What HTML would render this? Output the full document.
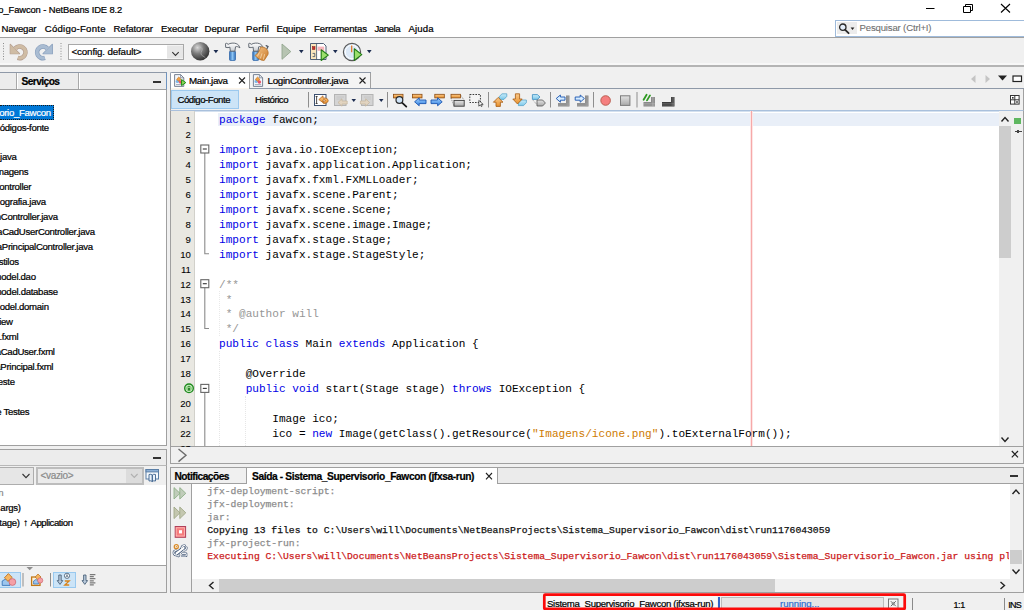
<!DOCTYPE html>
<html lang="pt-BR">
<head>
<meta charset="utf-8">
<title>Sistema_Supervisorio_Fawcon - NetBeans IDE 8.2</title>
<style>
html,body{margin:0;padding:0;}
body{width:1024px;height:610px;overflow:hidden;position:relative;background:#f0f0f0;font-family:"Liberation Sans",sans-serif;font-size:10px;color:#000;}
.a{position:absolute;}
.t{position:absolute;white-space:pre;line-height:16px;height:16px;-webkit-text-stroke:0.22px currentColor;}
.m{font-family:"Liberation Mono",monospace;-webkit-text-stroke:0;}
.b{font-weight:bold;}
svg{position:absolute;overflow:visible;}
.hl{background:#a3a3a3;}
.vl{background:#a3a3a3;}
</style>
</head>
<body>
<!-- ===== title + menu bar ===== -->
<div class="a" id="titlebar" style="left:0;top:0;width:1024px;height:37px;background:#fff"></div>
<div class="a hl" style="left:0;top:37px;width:1024px;height:1px;background:#a0a0a0"></div>
<svg id="wincontrols" style="left:920px;top:0" width="104" height="20" viewBox="920 0 104 20">
  <path d="M926 8.5H934.5" stroke="#000" stroke-width="1" fill="none"/>
  <path d="M963.5 6.5H970.5V12.5H963.5Z M965.5 6.5V4.5H972.5V10.5H970.5" stroke="#000" stroke-width="1" fill="none"/>
  <path d="M1001 4L1010 12.5M1010 4L1001 12.5" stroke="#000" stroke-width="1.1" fill="none"/>
</svg>
<div class="a" id="search" style="left:835px;top:20px;width:190px;height:17px;box-sizing:border-box;border:1px solid #9fbbdb;background:#fff">
  <div class="a" style="left:1px;top:1px;width:20px;height:12px;background:#ececec"></div>
</div>
<svg style="left:838px;top:22px" width="18" height="13" viewBox="0 0 18 13">
  <circle cx="4.8" cy="5.2" r="3.2" fill="#e4eefa" stroke="#2a2a2a" stroke-width="1.3"/>
  <path d="M7.2 7.8L10.6 11.2" stroke="#2a2a2a" stroke-width="1.8" stroke-linecap="round"/>
  <path d="M12.6 5.6h3.8l-1.9 2.3z" fill="#222"/>
</svg>

<!-- ===== main toolbar ===== -->
<div class="a" id="toolbar" style="left:0;top:38px;width:1024px;height:27px;background:#f0f0f0"></div>
<div class="a" style="left:0;top:63px;width:1024px;height:2px;background:#f7f7f7"></div>
<div class="a hl" style="left:0;top:65px;width:1024px;height:2px;background:#b4b4b4"></div>
<svg id="tbicons" style="left:0;top:38px" width="400" height="28" viewBox="0 38 400 28">
  <defs>
    <radialGradient id="gGlobe" cx="0.35" cy="0.3" r="0.75">
      <stop offset="0" stop-color="#d9d9d9"/><stop offset="0.45" stop-color="#7c7c7c"/><stop offset="1" stop-color="#2e2e2e"/>
    </radialGradient>
    <linearGradient id="gHandle" x1="0" x2="1" y1="0" y2="0">
      <stop offset="0" stop-color="#2f6fb8"/><stop offset="0.5" stop-color="#8cc4f4"/><stop offset="1" stop-color="#2f6fb8"/>
    </linearGradient>
    <linearGradient id="gHead" x1="0" x2="0" y1="0" y2="1"><stop offset="0" stop-color="#ffffff"/><stop offset="1" stop-color="#c9cdd2"/></linearGradient>
    <linearGradient id="gBroom" x1="0" x2="1" y1="0" y2="1">
      <stop offset="0" stop-color="#f6c68a"/><stop offset="1" stop-color="#c97a2a"/>
    </linearGradient>
  </defs>
  <!-- drag handles -->
  <path d="M3.5 43V61" stroke="#8c8c8c" stroke-width="1" stroke-dasharray="1 1.6" fill="none"/>
  <path d="M61 43V61" stroke="#8c8c8c" stroke-width="1" stroke-dasharray="1 1.6" fill="none"/>
  <!-- undo -->
  <g id="undo" stroke-linejoin="round" stroke-linecap="butt">
    <path d="M10.3 44.5V53.7H19.5Z" fill="#b49e90" stroke="#b49e90" stroke-width="1.2"/>
    <path d="M15.4 48.4A5.8 5.8 0 1 1 17.7 57.8" fill="none" stroke="#b49e90" stroke-width="4.6"/>
    <path d="M10.3 44.5V53.7H19.5Z" fill="#cfbca4"/>
    <path d="M15 48.9A5.8 5.8 0 1 1 17.9 57.75" fill="none" stroke="#cfbca4" stroke-width="3.3"/>
  </g>
  <!-- redo -->
  <g id="redo" stroke-linejoin="round" stroke-linecap="butt" transform="translate(62.6 0) scale(-1 1)">
    <path d="M10.3 44.5V53.7H19.5Z" fill="#869cba" stroke="#869cba" stroke-width="1.2"/>
    <path d="M15.4 48.4A5.8 5.8 0 1 1 17.7 57.8" fill="none" stroke="#869cba" stroke-width="4.6"/>
    <path d="M10.3 44.5V53.7H19.5Z" fill="#a9bcd2"/>
    <path d="M15 48.9A5.8 5.8 0 1 1 17.9 57.75" fill="none" stroke="#a9bcd2" stroke-width="3.3"/>
  </g>
  <!-- combo -->
  <rect x="68.5" y="44.5" width="115" height="15" fill="#fff" stroke="#a8a8a8" stroke-width="1"/>
  <rect x="167" y="45.5" width="16" height="13" fill="#e6e6e6"/>
  <path d="M172.3 52.2L175.5 55.4L178.7 52.2" stroke="#333" stroke-width="1.1" fill="none"/>
  <!-- globe -->
  <circle cx="200.2" cy="51.2" r="9.2" fill="url(#gGlobe)"/>
  <path d="M196 45C198 47 201 46.5 202 48.5C203 50.5 200.5 51.5 201 54C201.4 56 204 56 205.5 58" stroke="#bdbdbd" stroke-width="0.9" fill="none" opacity="0.6"/>
  <path d="M213.5 50H218.3L215.9 53.2Z" fill="#1c2c50"/>
  <!-- hammer (build) -->
  <g>
    <rect x="229.5" y="51" width="6" height="9.5" rx="1.1" fill="url(#gHandle)" stroke="#2a62a6" stroke-width="0.7"/>
    <path d="M225.5 44.1Q225.3 43.2 226.6 43.3L228.2 44.3C230.0 43 234.0 42.7 236.2 43.6C238.2 44.4 239.5 46 239.9 47.8C238.2 46.7 236.8 46.3 235.5 46.8L234.9 51.2H230.3L229.9 47.1C228.8 47.7 227.4 47.7 225.7 47.4Z" fill="url(#gHead)" stroke="#555c66" stroke-width="0.9" stroke-linejoin="round"/>
  </g>
  <!-- clean and build -->
  <g>
    <rect x="252.7" y="51" width="6" height="9.5" rx="1.1" fill="url(#gHandle)" stroke="#2a62a6" stroke-width="0.7"/>
    <path d="M248.7 44.1Q248.5 43.2 249.8 43.3L251.4 44.3C253.2 43 257.2 42.7 259.4 43.6C261.4 44.4 262.7 46 263.1 47.8C261.4 46.7 260.0 46.3 258.7 46.8L258.1 51.2H253.5L253.1 47.1C252.0 47.7 250.6 47.7 248.9 47.4Z" fill="url(#gHead)" stroke="#555c66" stroke-width="0.9" stroke-linejoin="round"/>
    <path d="M266.2 45.6L268 46.6L266.8 49" fill="none" stroke="#555c66" stroke-width="1.3" stroke-linecap="round"/>
    <path d="M260.6 47.2C262.6 46.6 265.4 47.6 266.8 49.2C268.2 51 268.4 52.8 268 54.4L264.2 60.4C261 60.6 257.2 58.4 255 55.4C257.6 54 259.6 50.8 260.6 47.2Z" fill="url(#gBroom)" stroke="#b0681c" stroke-width="0.7" stroke-linejoin="round"/>
    <path d="M259.4 52.4L257.4 56.4M262 53.4L260.4 58.4M264.6 54.2L263.4 59.6" stroke="#fbe2bc" stroke-width="0.7" fill="none"/>
  </g>
  <!-- run -->
  <path d="M282 44L290.8 51.6L282 59.3Z" fill="#b7c4b2" stroke="#93a68e" stroke-width="0.9" stroke-linejoin="round"/>
  <path d="M299 50H303.6L301.3 53.2Z" fill="#1c2c50"/>
  <!-- debug -->
  <g>
    <path d="M310.5 43.5H323.5L326 46V59.5H310.5Z" fill="#fff" stroke="#3c4e66" stroke-width="0.9"/>
    <rect x="311" y="44" width="5.4" height="15" fill="#fbe6bd"/>
    <path d="M316.6 43.5V59.5" stroke="#3c4e66" stroke-width="0.8"/>
    <rect x="312.4" y="46.6" width="2.6" height="3" fill="#c9302c" stroke="#7c1d1a" stroke-width="0.5"/>
    <path d="M312.6 53.4H314.8V56.6H312.6" stroke="#3c4e66" stroke-width="0.8" fill="none"/>
    <rect x="317.6" y="46.6" width="6.6" height="4.2" fill="#f7b4bc"/>
    <path d="M321.2 49.7L328.3 55.1L321.2 60.5Z" fill="#9be06c" stroke="#1f7a16" stroke-width="1.1" stroke-linejoin="round"/>
  </g>
  <path d="M333 50H337.6L335.3 53.2Z" fill="#1c2c50"/>
  <!-- profile -->
  <g>
    <circle cx="352" cy="52" r="8.6" fill="#dce9f7" stroke="#585858" stroke-width="1.2"/>
    <circle cx="352" cy="52" r="6.8" fill="none" stroke="#fff" stroke-width="1"/>
    <path d="M351.7 45.5V52.2" stroke="#e0701a" stroke-width="1.2"/>
    <path d="M354.3 48.8L361.8 54.6L354.3 60.4Z" fill="#9be06c" stroke="#1f7a16" stroke-width="1.1" stroke-linejoin="round"/>
  </g>
  <path d="M367 50H371.6L369.3 53.2Z" fill="#1c2c50"/>
</svg>


<!-- ===== projects panel ===== -->
<div class="a" id="projhead" style="left:0;top:72px;width:167px;height:18px;box-sizing:border-box;background:#ececec;border-top:1px solid #8f99a8;border-right:1px solid #6f94c0;border-bottom:1px solid #a0a0a0"></div>
<div class="a" style="left:16px;top:73px;width:1px;height:16px;background:#a8a8a8"></div>
<div class="a" style="left:17px;top:73px;width:1px;height:16px;background:#fff"></div>
<div class="a" style="left:78px;top:73px;width:1px;height:16px;background:#a8a8a8"></div>
<div class="a" style="left:79px;top:73px;width:1px;height:16px;background:#fff"></div>
<div class="a" style="left:153px;top:81px;width:8px;height:2px;background:#333"></div>
<div class="a" id="projtree" style="left:0;top:90px;width:167px;height:356px;box-sizing:border-box;background:#fff;border-right:1px solid #a0a0a0;border-bottom:1px solid #a0a0a0"></div>
<div class="a" id="treesel" style="left:0;top:105px;width:54px;height:15px;box-sizing:border-box;background:#0078d7;border:1px dotted #1a1a1a;border-left:none"></div>

<!-- ===== editor panel ===== -->
<div class="a" id="edtabs" style="left:170px;top:72px;width:854px;height:17px;background:#f0f0f0"></div>
<div class="a" id="edtabs-strip" style="left:170px;top:72px;width:201px;height:17px;box-sizing:border-box;border-top:1px solid #8f99a8;border-left:1px solid #8f99a8;border-radius:2px 0 0 0"></div>
<div class="a" id="tab-main" style="left:171px;top:73px;width:78px;height:16px;background:#fff"></div>
<div class="a" style="left:171px;top:88px;width:78px;height:2px;background:#fcf5ea"></div>
<div class="a" style="left:249px;top:73px;width:1px;height:16px;background:#a0a0a0"></div>
<div class="a" id="tab-login" style="left:250px;top:73px;width:120px;height:15px;background:#f4f4f4"></div>
<div class="a" style="left:370px;top:73px;width:1px;height:16px;background:#a0a0a0"></div>
<div class="a" style="left:249px;top:88px;width:775px;height:1px;background:#8f99a8"></div>
<div class="a" id="edtoolbar" style="left:170px;top:89px;width:854px;height:22px;box-sizing:border-box;border-left:1px solid #a0a0a0;border-right:1px solid #a0a0a0;border-bottom:1px solid #a9c0dc;background:#f0f0f0"></div>
<div class="a" id="btn-src" style="left:171px;top:90px;width:68px;height:19px;box-sizing:border-box;background:#cce4f7;border:1px solid #9cc9ee"></div>
<div class="a" id="editor" style="left:170px;top:111px;width:854px;height:336px;box-sizing:border-box;background:#fff;border-left:1px solid #a0a0a0;border-right:1px solid #a0a0a0;border-bottom:1px solid #a0a0a0"></div>
<div class="a" style="left:171px;top:111px;width:852px;height:1px;background:#d3e0ef"></div>
<div class="a" id="gutter" style="left:171px;top:111px;width:24px;height:335px;background:#e9e8e2"></div>
<div class="a" style="left:194px;top:111px;width:1px;height:335px;background:#d2d1cb"></div>
<div class="a" id="curline" style="left:218px;top:113px;width:781px;height:13px;background:#e9eff8"></div>
<div class="a" id="margin" style="left:751px;top:111px;width:1px;height:335px;background:#f6a9a9"></div>
<div class="a" style="left:750px;top:111px;width:1px;height:335px;background:#fde6e6"></div>
<div class="a" style="left:752px;top:111px;width:1px;height:335px;background:#fde6e6"></div>
<div class="a" id="vscroll" style="left:999px;top:111px;width:12px;height:335px;background:#f0f0f0"></div>
<div class="a" style="left:999px;top:126px;width:12px;height:132px;background:#cdcdcd"></div>
<div class="a" id="stripe" style="left:1011px;top:111px;width:12px;height:335px;background:#f0f0f0"></div>
<div class="a" style="left:1014px;top:118px;width:7px;height:6px;background:#5fb760"></div>
<div class="a" style="left:1015px;top:131px;width:7px;height:1px;background:#444"></div>
<div class="a" style="left:1017px;top:130px;width:2px;height:3px;background:#444"></div>
<svg style="left:999px;top:111px" width="12" height="335" viewBox="0 0 12 335">
  <path d="M2.5 10.5L6 6.5L9.5 10.5" stroke="#222" stroke-width="1.4" fill="none"/>
  <path d="M2.5 326.5L6 330.5L9.5 326.5" stroke="#222" stroke-width="1.4" fill="none"/>
</svg>
<svg id="edicons" style="left:171px;top:72px" width="853" height="40" viewBox="171 72 853 40">
  <defs>
    <linearGradient id="gOr" x1="0" x2="0" y1="0" y2="1"><stop offset="0" stop-color="#fbc98a"/><stop offset="1" stop-color="#e8922e"/></linearGradient>
    <linearGradient id="gBl" x1="0" x2="0" y1="0" y2="1"><stop offset="0" stop-color="#a8d4ff"/><stop offset="1" stop-color="#2f7fe0"/></linearGradient>
    <linearGradient id="gTag" x1="0" x2="0" y1="0" y2="1"><stop offset="0" stop-color="#c8ecfa"/><stop offset="1" stop-color="#7cc8ea"/></linearGradient>
    <linearGradient id="gGy" x1="0" x2="0" y1="0" y2="1"><stop offset="0" stop-color="#e4e4e4"/><stop offset="1" stop-color="#a8a8a8"/></linearGradient>
  </defs>
  <!-- tab file icons -->
  <g>
    <path d="M174.6 74.6H180.6L183.8 77.8V86.4H174.6Z" fill="#f4f7fb" stroke="#6a7588" stroke-width="0.9"/>
    <path d="M180.6 74.6V77.8H183.8" fill="none" stroke="#6a7588" stroke-width="0.7"/>
    <path d="M176.0 84.6H182.4" stroke="#8a94a6" stroke-width="0.8"/>
    <circle cx="177.4" cy="81.4" r="1.7" fill="#7db6ea"/>
    <path d="M178.8 77L181.0 79.2L178.8 81.4L176.6 79.2Z" fill="#f0a040" stroke="#b86a18" stroke-width="0.6"/>
    <circle cx="180.6" cy="82" r="1.7" fill="#e85068"/>
    <path d="M181.6 79.6L185.8 82.6L181.6 85.6Z" fill="#8fdc5c" stroke="#1f8a16" stroke-width="1"/>
  </g>
  <g>
    <path d="M253.4 74.6H259.4L262.6 77.8V86.4H253.4Z" fill="#f4f7fb" stroke="#6a7588" stroke-width="0.9"/>
    <path d="M259.4 74.6V77.8H262.6" fill="none" stroke="#6a7588" stroke-width="0.7"/>
    <path d="M254.8 84.6H261.2" stroke="#8a94a6" stroke-width="0.8"/>
    <circle cx="256.2" cy="81.4" r="1.7" fill="#7db6ea"/>
    <path d="M257.6 77L259.8 79.2L257.6 81.4L255.4 79.2Z" fill="#f0a040" stroke="#b86a18" stroke-width="0.6"/>
    <circle cx="259.4" cy="82" r="1.7" fill="#e85068"/>
  </g>
  <!-- tab close x -->
  <path d="M239 77.5L245 83.5M245 77.5L239 83.5" stroke="#222" stroke-width="1.1" fill="none"/>
  <path d="M359.5 77.5L365.5 83.5M365.5 77.5L359.5 83.5" stroke="#222" stroke-width="1.1" fill="none"/>
  <!-- tab row controls -->
  <path d="M975.5 75L971 79L975.5 83Z" fill="#c4c4c4"/>
  <path d="M985.5 75L990 79L985.5 83Z" fill="#c4c4c4"/>
  <path d="M998 75.5H1007L1002.5 80.5Z" fill="#222"/>
  <rect x="1013" y="76" width="8.5" height="5.5" fill="#fff" stroke="#222" stroke-width="1.2"/>
  <!-- separators -->
  <g stroke="#8e8e8e" stroke-width="1">
    <path d="M308.5 92V107.5M387.5 92V107.5M488.5 92V107.5M550.5 92V107.5M593.5 92V107.5M637 92V107.5"/>
  </g>
  <!-- last edit -->
  <rect x="314.5" y="94.5" width="11.5" height="11" fill="#fff" stroke="#3c5070" stroke-width="1"/>
  <path d="M316.6 96.5V103.5M315.6 96.5H317.6M315.6 103.5H317.6" stroke="#222" stroke-width="0.8" fill="none"/>
  <path d="M318.8 99.6L323 95.8V98C326.4 97.6 328.2 99 328.2 100.6C328.2 102.6 326 103.6 323.4 103.4V101.4C324.6 101.4 325.2 101 325.2 100.4C325.2 99.8 324.4 99.8 323 100V102.6Z" fill="url(#gOr)" stroke="#a85a10" stroke-width="0.7" stroke-linejoin="round"/>
  <!-- back (disabled) -->
  <rect x="334.5" y="94.5" width="11.5" height="11" fill="#d4d4d4" stroke="#b4b4b4" stroke-width="1"/>
  <path d="M336.5 97H344M336.5 99H342" stroke="#c2c2c2" stroke-width="0.8"/>
  <path d="M338 102.5L342 98.8V101H347.2V104H342V106.2Z" fill="#e2d4c0" stroke="#c4b49c" stroke-width="0.7" stroke-linejoin="round"/>
  <path d="M351.5 99H356L353.75 102Z" fill="#1c2c50"/>
  <!-- forward (disabled) -->
  <rect x="361.5" y="94.5" width="11.5" height="11" fill="#d4d4d4" stroke="#b4b4b4" stroke-width="1"/>
  <path d="M364 97H371M366 99H371" stroke="#c2c2c2" stroke-width="0.8"/>
  <path d="M369.6 102.5L365.6 98.8V101H360.4V104H365.6V106.2Z" fill="#e2d4c0" stroke="#c4b49c" stroke-width="0.7" stroke-linejoin="round"/>
  <path d="M379 99H383.5L381.25 102Z" fill="#1c2c50"/>
  <!-- find selection -->
  <rect x="393.5" y="94.3" width="9.5" height="3.6" fill="url(#gOr)" stroke="#8a4a10" stroke-width="0.8"/>
  <path d="M402 102.6L406.3 106.6" stroke="#1a1a1a" stroke-width="1.8" stroke-linecap="round"/>
  <circle cx="399.4" cy="100" r="3.4" fill="#cfe4f8" stroke="#2a2a2a" stroke-width="1.2"/>
  <!-- find prev -->
  <rect x="412.5" y="94.3" width="9.5" height="3.6" fill="url(#gOr)" stroke="#8a4a10" stroke-width="0.8"/>
  <path d="M414.6 101.8L419.2 97.8V100H426V103.6H419.2V105.8Z" fill="url(#gBl)" stroke="#1a55b0" stroke-width="0.9" stroke-linejoin="round"/>
  <!-- find next -->
  <rect x="434.8" y="94.3" width="9.5" height="3.6" fill="url(#gOr)" stroke="#8a4a10" stroke-width="0.8"/>
  <path d="M442.2 101.8L437.6 97.8V100H431V103.6H437.6V105.8Z" fill="url(#gBl)" stroke="#1a55b0" stroke-width="0.9" stroke-linejoin="round"/>
  <!-- toggle highlight -->
  <path d="M451 98L454 106M460.5 95L464.3 100.5" stroke="#555" stroke-width="0.7" stroke-dasharray="1 1" fill="none"/>
  <rect x="451" y="94.3" width="9.5" height="3.6" fill="url(#gOr)" stroke="#8a4a10" stroke-width="0.8"/>
  <rect x="454" y="100.4" width="10.2" height="5.8" fill="url(#gGy)" stroke="#3a3a3a" stroke-width="0.9"/>
  <!-- rect select -->
  <rect x="469.8" y="94.5" width="10.6" height="8" fill="#f4f4f4" stroke="#3a3a3a" stroke-width="1" stroke-dasharray="1.6 1.2"/>
  <path d="M478.8 100.4V106.2L480.3 104.8L481.4 106.6L482.2 106.1L481.2 104.4H483.2Z" fill="#fff" stroke="#222" stroke-width="0.7" stroke-linejoin="round"/>
  <!-- prev bookmark -->
  <path d="M499.2 96.6L502 93.8H506.8V96.4L504 99.4H499.2Z" fill="url(#gTag)" stroke="#4a9cc4" stroke-width="0.7" stroke-linejoin="round"/>
  <path d="M498.2 97.4L503 102.2H500.4V106.4H496V102.2H493.4Z" fill="url(#gOr)" stroke="#a85a10" stroke-width="0.8" stroke-linejoin="round"/>
  <!-- next bookmark -->
  <path d="M518.4 102.8L521.2 100H526.4V102.6L523.6 105.6H518.4Z" fill="url(#gTag)" stroke="#4a9cc4" stroke-width="0.7" stroke-linejoin="round"/>
  <path d="M517.5 104L512.8 99H515.4V93.8H519.6V99H522.2Z" fill="url(#gOr)" stroke="#a85a10" stroke-width="0.8" stroke-linejoin="round"/>
  <!-- toggle bookmark -->
  <path d="M533.2 100.4L538.2 106" stroke="#666" stroke-width="0.7" stroke-dasharray="1 1"/>
  <path d="M532.4 94.6H537.4L540 97L537.4 99.4H532.4Z" fill="url(#gTag)" stroke="#3a8cc0" stroke-width="0.8" stroke-linejoin="round"/>
  <path d="M537 100H542.6L545.4 103L542.6 106H537Z" fill="url(#gGy)" stroke="#555" stroke-width="0.8" stroke-linejoin="round"/>
  <!-- shift left -->
  <path d="M566 95.5H569.5V106.5H558V103H566Z" fill="#8a8a8a" />
  <path d="M558 104H569.5M558 105.4H569.5M567.2 95.5V106.5M568.4 95.5V106.5" stroke="#b0b0b0" stroke-width="0.4"/>
  <path d="M556.2 98.5L560.4 95V97H565V100.2H560.4V102.2Z" fill="#d6ecff" stroke="#1a55b0" stroke-width="0.9" stroke-linejoin="round"/>
  <!-- shift right -->
  <path d="M585 95.5H588.5V106.5H577V103H585Z" fill="#8a8a8a"/>
  <path d="M577 104H588.5M577 105.4H588.5M586.2 95.5V106.5M587.4 95.5V106.5" stroke="#b0b0b0" stroke-width="0.4"/>
  <path d="M584.4 98.5L580.2 95V97H575.2V100.2H580.2V102.2Z" fill="#d6ecff" stroke="#1a55b0" stroke-width="0.9" stroke-linejoin="round"/>
  <!-- macro record / stop -->
  <circle cx="605.6" cy="100.5" r="4.8" fill="#f57f7f" stroke="#b4584a" stroke-width="0.9"/>
  <rect x="620.5" y="95.8" width="9.4" height="9.6" fill="url(#gGy)" stroke="#7c7c7c" stroke-width="1"/>
  <!-- comment -->
  <path d="M651 97H655V106.5H643.5V102H651Z" fill="#888"/>
  <path d="M643.5 103.4H655M643.5 105H655M652.4 97V106.5M653.8 97V106.5" stroke="#c4c4c4" stroke-width="0.4"/>
  <path d="M643.6 99.8L646.6 94.8M647 100.4L650 95.4" stroke="#2e9a22" stroke-width="1.8" stroke-linecap="round"/>
  <!-- uncomment -->
  <path d="M671 97H674.5V106.5H662V102H671Z" fill="#3a3a3a"/>
  <path d="M662 103.4H674.5M662 105H674.5M672.2 97V106.5M673.4 97V106.5" stroke="#999" stroke-width="0.4"/>
  <!-- right corner icon -->
  <rect x="1010.5" y="95.5" width="8.6" height="8.6" fill="#fff" stroke="#333" stroke-width="1"/>
  <path d="M1014.8 95.5V104.1M1010.5 99.8H1019.1" stroke="#333" stroke-width="1"/>
  <rect x="1012" y="97" width="1.6" height="1.6" fill="#333"/><rect x="1016.2" y="101.2" width="1.6" height="1.6" fill="#333"/>
</svg>

<!-- indent guides -->
<div class="a" style="left:219px;top:351px;width:0;height:95px;border-left:1px dotted #e6e6e6"></div>
<div class="a" style="left:245px;top:396px;width:0;height:50px;border-left:1px dotted #e6e6e6"></div>
<div class="a" style="left:219px;top:291px;width:0;height:45px;border-left:1px dotted #e9e9e9"></div>
<!-- fold marks -->
<svg id="folds" style="left:194.6px;top:111px" width="20" height="335" viewBox="195 111 20 335">
  <g stroke="#8a8a8a" stroke-width="1.1" fill="#fff">
    <path d="M204.8 149V253.7H209" fill="none"/>
    <rect x="200.8" y="145" width="8" height="8" stroke="#666"/>
    <path d="M202.8 149H206.8" stroke="#333"/>
    <path d="M204.8 283.7V328.5H209" fill="none"/>
    <rect x="200.8" y="279.7" width="8" height="8" stroke="#666"/>
    <path d="M202.8 283.7H206.8" stroke="#333"/>
    <path d="M204.8 388V446" fill="none"/>
    <rect x="200.8" y="384.4" width="8" height="8" stroke="#666"/>
    <path d="M202.8 388.4H206.8" stroke="#333"/>
  </g>
  <circle cx="189" cy="388.3" r="4.3" fill="#d8f0d0" stroke="#1c8a1c" stroke-width="1.4"/>
  <circle cx="189" cy="388.3" r="2.9" fill="#8fd084"/>
  <path d="M189 386.2V386.9M189 387.9V390.6" stroke="#0f6a12" stroke-width="1.5"/>
</svg>
<!-- breadcrumb bar -->
<div class="a" id="crumbs" style="z-index:3;left:170px;top:447px;width:854px;height:17px;box-sizing:border-box;background:#f0f0f0;border-left:1px solid #a0a0a0;border-right:1px solid #a0a0a0;border-bottom:1px solid #a0a0a0"></div>
<svg style="z-index:4;left:176px;top:448px" width="14" height="15" viewBox="0 0 14 15">
  <path d="M2.5 1L10 7.3L2.5 13.6" stroke="#6c6c6c" stroke-width="1.4" fill="none"/>
</svg>
<svg style="z-index:4;left:1010px;top:449px" width="10" height="10" viewBox="0 0 10 10">
  <path d="M1.8 2L8 8.4M8 2L1.8 8.4" stroke="#222" stroke-width="1.2" fill="none"/>
</svg>

<!-- ===== navigator panel ===== -->
<div class="a" id="navhead" style="left:0;top:449px;width:167px;height:17px;box-sizing:border-box;background:#ececec;border-top:1px solid #a0a0a0;border-right:1px solid #a0a0a0;border-bottom:1px solid #b8b8b8"></div>
<div class="a" style="left:153px;top:457px;width:8px;height:2px;background:#333"></div>
<div class="a" id="navcombos" style="left:0;top:466px;width:167px;height:19px;box-sizing:border-box;background:#f0f0f0;border-right:1px solid #a0a0a0"></div>
<div class="a" id="navcombo1" style="left:-4px;top:467px;width:38px;height:18px;box-sizing:border-box;background:#e6e6e6;border:1px solid #adadad"></div>
<div class="a" id="navcombo2" style="left:36px;top:467px;width:108px;height:18px;box-sizing:border-box;background:#ebebeb;border:2px solid #bdbdbd"></div>
<div class="a" style="left:126px;top:469px;width:16px;height:14px;background:#dcdcdc"></div>
<svg style="left:0;top:466px" width="167" height="19" viewBox="0 466 167 19">
  <path d="M22.5 474L26 477.6L29.5 474" stroke="#333" stroke-width="1.1" fill="none"/>
  <path d="M131 474L134.3 477.4L137.6 474" stroke="#b0b0b0" stroke-width="1.1" fill="none"/>
  <g transform="translate(145.5 469)">
    <rect x="0.5" y="0.5" width="12.5" height="9.5" fill="#f4f8fc" stroke="#5a7ea6" stroke-width="1"/>
    <rect x="0.5" y="0.5" width="12.5" height="2.4" fill="#8db0d6" stroke="#5a7ea6" stroke-width="1"/>
    <path d="M3.5 5.5Q5.5 4.8 6.8 6V12.5Q5.5 11.4 3.5 12Z M10 5.5Q8 4.8 6.8 6V12.5Q8 11.4 10 12Z" fill="#eaf2fb" stroke="#3d638f" stroke-width="0.9"/>
  </g>
</svg>
<div class="a" id="navtree" style="left:0;top:485px;width:167px;height:81px;box-sizing:border-box;background:#fff;border-right:1px solid #a0a0a0;border-bottom:1px solid #a0a0a0"></div>
<div class="a" id="navtools" style="left:0;top:566px;width:167px;height:27px;box-sizing:border-box;background:#f0f0f0;border-right:1px solid #a0a0a0;border-bottom:1px solid #a0a0a0"></div>
<div class="a" style="left:-1px;top:572px;width:22px;height:16px;box-sizing:border-box;background:#cce4f7;border:1px solid #99c9ef"></div>
<div class="a" style="left:53px;top:572px;width:23px;height:16px;box-sizing:border-box;background:#cce4f7;border:1px solid #99c9ef"></div>
<svg id="navicons" style="left:0;top:566px" width="167" height="27" viewBox="0 566 167 27">
  <path d="M26.5 567H33L29.75 570.2Z" fill="#8e8e8e"/>
  <path d="M23 573V586.5M50.5 573V586.5" stroke="#8e8e8e" stroke-width="1"/>
  <!-- icon 1 -->
  <path d="M2.2 585.4V581L6 578.8L10 581.6V585.4Z" fill="#9cc6ee" stroke="#2d6cb4" stroke-width="0.8" stroke-linejoin="round"/>
  <path d="M8.4 573.6L12.2 577.4L8 581.4L4.4 577.8Z" fill="#f6b660" stroke="#b86a18" stroke-width="0.8" stroke-linejoin="round"/>
  <circle cx="12.4" cy="582" r="3.4" fill="#f4a0a6" stroke="#c8606a" stroke-width="0.7"/>
  <!-- icon 2 -->
  <rect x="31.6" y="577" width="8.4" height="8.4" fill="#fdf0d8" stroke="#c07818" stroke-width="1.3"/>
  <path d="M33.6 584V581L36 579.4L38.4 581.4V584Z" fill="#9cc6ee" stroke="#2d6cb4" stroke-width="0.7"/>
  <path d="M38 574L41 577L38 580L35.2 577Z" fill="#f6b660" stroke="#b86a18" stroke-width="0.7" stroke-linejoin="round"/>
  <circle cx="40.2" cy="580.4" r="2.6" fill="#f4a0a6" stroke="#c8606a" stroke-width="0.6"/>
  <!-- icon 3: sort A-Z -->
  <path d="M58.8 575H61.2V580.6H62.8L60 584.4L57.2 580.6H58.8Z" fill="#b8c8da" stroke="#3c566e" stroke-width="0.8" stroke-linejoin="round"/>
  <circle cx="67" cy="575.8" r="2.6" fill="#fff" stroke="#3c566e" stroke-width="0.8"/>
  <path d="M65.9 577.2L67 574.4L68.1 577.2M66.3 576.4H67.7" stroke="#3c566e" stroke-width="0.6" fill="none"/>
  <path d="M64.8 581H69.2L64.8 585H69.2" stroke="#d88218" stroke-width="1.3" fill="none"/>
  <!-- icon 4: sort by source -->
  <path d="M83.6 575H86V580.6H87.6L84.8 584.4L82 580.6H83.6Z" fill="#b8c8da" stroke="#3c566e" stroke-width="0.8" stroke-linejoin="round"/>
  <path d="M89.8 574.6H95.4M89.8 576.6H93.8M89.8 578.6H95.4M89.8 580.8H93.8M89.8 582.8H95.4M89.8 584.8H93.8" stroke="#7a7a7a" stroke-width="1.2"/>
</svg>


<!-- ===== output panel ===== -->
<div class="a" id="outtabs" style="left:170px;top:467px;width:854px;height:17px;box-sizing:border-box;background:#ebebeb;border-top:1px solid #a0a0a0;border-left:1px solid #a0a0a0;border-right:1px solid #a0a0a0;border-bottom:1px solid #a0a0a0"></div>
<div class="a" id="tab-notif" style="left:171px;top:468px;width:75px;height:15px;background:#f0f0f0"></div>
<div class="a" style="left:246px;top:468px;width:1px;height:15px;background:#a0a0a0"></div>
<div class="a" id="tab-out" style="left:247px;top:468px;width:250px;height:16px;background:#fff"></div>
<div class="a" style="left:497px;top:468px;width:1px;height:15px;background:#a0a0a0"></div>
<div class="a" style="left:1010px;top:475px;width:8px;height:2px;background:#333"></div>
<div class="a" id="outbody" style="left:170px;top:484px;width:854px;height:109px;box-sizing:border-box;background:#fff;border-left:1px solid #a0a0a0;border-right:1px solid #a0a0a0;border-bottom:1px solid #a0a0a0"></div>
<div class="a" id="outside" style="left:171px;top:484px;width:21px;height:108px;box-sizing:border-box;background:#f0f0f0;border-right:1px solid #a0a0a0"></div>
<div class="a" id="outv" style="left:1010px;top:484px;width:13px;height:95px;background:#f0f0f0"></div>
<div class="a" style="left:1010px;top:550px;width:12px;height:14px;background:#cdcdcd"></div>
<div class="a" id="outh" style="left:192px;top:579px;width:831px;height:13px;background:#f0f0f0"></div>
<div class="a" style="left:219px;top:579px;width:556px;height:13px;background:#cdcdcd"></div>
<svg style="left:192px;top:484px" width="832" height="108" viewBox="192 484 832 108">
  <path d="M486 473L492 479.4M492 473L486 479.4" stroke="#222" stroke-width="1.1" fill="none"/>
  <path d="M1012.5 494L1016 490L1019.5 494" stroke="#222" stroke-width="1.4" fill="none"/>
  <path d="M1012.5 569.5L1016 573.5L1019.5 569.5" stroke="#222" stroke-width="1.4" fill="none"/>
  <path d="M213.5 582L209.5 585.5L213.5 589" stroke="#222" stroke-width="1.4" fill="none"/>
  <path d="M1000.5 582L1004.5 585.5L1000.5 589" stroke="#222" stroke-width="1.4" fill="none"/>
</svg>
<svg id="outicons" style="left:172px;top:484px" width="20" height="108" viewBox="172 484 20 108">
  <path d="M174 487.6L180 493.3L174 499Z M179.8 487.6L185.8 493.3L179.8 499Z" fill="#c0ccba" stroke="#8fb088" stroke-width="0.9" stroke-linejoin="round"/>
  <path d="M174 507L180 512.8L174 518.6Z M179.8 507L185.8 512.8L179.8 518.6Z" fill="#c4c7b0" stroke="#a0a888" stroke-width="0.9" stroke-linejoin="round"/>
  <rect x="175.2" y="526.5" width="10.4" height="10.8" fill="#f57c7c" stroke="#b0405a" stroke-width="1"/>
  <rect x="176.2" y="527.8" width="8.4" height="8.2" fill="none" stroke="#fbb" stroke-width="0.8"/>
  <rect x="179" y="530.2" width="3" height="3.2" fill="#fff"/>
  <!-- wrench -->
  <g fill="none" stroke-linecap="round" stroke-linejoin="round">
    <path d="M176.6 553.4L183.6 548" stroke="#3a5070" stroke-width="3.6"/>
    <path d="M184.6 545.6C182.6 545.4 181.4 546.8 181.8 548.6M186.4 547.6C186.6 549.4 185.2 550.6 183.4 550.2" stroke="#3a5070" stroke-width="2.3"/>
    <path d="M173.8 552.4C173.6 554 174.8 555.4 176.6 555M176.2 550.6C174.8 550.4 173.6 551.4 173.8 552.6M177.4 555.8C178.4 556.4 179.4 555.6 179 554.4" stroke="#3a5070" stroke-width="2.3"/>
    <path d="M182.4 553.6H186.2V556H182.4" stroke="#3a5070" stroke-width="2.2"/>
    <path d="M176.6 553.4L183.6 548" stroke="#fff" stroke-width="2.2"/>
    <path d="M184.6 545.6C182.6 545.4 181.4 546.8 181.8 548.6M186.4 547.6C186.6 549.4 185.2 550.6 183.4 550.2" stroke="#fff" stroke-width="1.1"/>
    <path d="M173.8 552.4C173.6 554 174.8 555.4 176.6 555M176.2 550.6C174.8 550.4 173.6 551.4 173.8 552.6M177.4 555.8C178.4 556.4 179.4 555.6 179 554.4" stroke="#fff" stroke-width="1.1"/>
    <path d="M182.4 553.6H186.2V556H182.4" stroke="#fff" stroke-width="1"/>
  </g>
  <circle cx="176.3" cy="546.7" r="2" fill="#fff" stroke="#d88a28" stroke-width="1.3"/>
  <circle cx="176.3" cy="546.7" r="0.7" fill="#d88a28"/>
</svg>


<!-- ===== status bar ===== -->
<div class="a" id="statusbar" style="left:0;top:593px;width:1024px;height:17px;background:#f0f0f0"></div>
<div class="a" id="statustext" style="left:545px;top:595px;width:172px;height:15px;background:#f8f8f8"></div>
<div class="a" style="left:718px;top:597px;width:2px;height:11px;background:#2f64c8"></div>
<div class="a" id="progress" style="left:721px;top:597px;width:163px;height:13px;box-sizing:border-box;background:#e6e6e6;border:1px solid #bcbcbc"></div>
<svg style="left:888px;top:598px" width="11" height="11" viewBox="0 0 11 11">
  <rect x="0.5" y="1" width="9.5" height="9.5" fill="#f4f4f4" stroke="#6a6a6a" stroke-width="0.9"/>
  <path d="M2.8 3.2L7.8 8.2M7.8 3.2L2.8 8.2" stroke="#666" stroke-width="1"/>
  <path d="M3.4 5.7H7.2M5.3 3.8V7.6" stroke="#888" stroke-width="0.8"/>
</svg>
<svg id="redbox" style="left:540px;top:590px;z-index:5" width="370" height="20" viewBox="540 590 370 20"><rect x="544.3" y="594.6" width="360.4" height="14.3" rx="0.8" fill="none" stroke="#fb0a0a" stroke-width="2.7"/></svg>
<div class="a" style="left:912px;top:598px;width:1px;height:12px;background:#8a8a8a"></div>
<div class="a" style="left:1004px;top:598px;width:1px;height:12px;background:#8a8a8a"></div>

<span class="t" style="left:-85.80px;top:2.00px;font-size:9.4px;letter-spacing:-0.100px;">Sistema_Supervisorio_Fawcon - NetBeans IDE 8.2</span>
<span class="t" style="left:1.50px;top:21.00px;font-size:9.6px;letter-spacing:-0.211px;">Navegar</span>
<span class="t" style="left:44.75px;top:21.00px;font-size:9.6px;letter-spacing:0.237px;">Código-Fonte</span>
<span class="t" style="left:113.50px;top:21.00px;font-size:9.6px;letter-spacing:-0.062px;">Refatorar</span>
<span class="t" style="left:161.00px;top:21.00px;font-size:9.6px;letter-spacing:-0.125px;">Executar</span>
<span class="t" style="left:204.50px;top:21.00px;font-size:9.6px;letter-spacing:0.055px;">Depurar</span>
<span class="t" style="left:246.00px;top:21.00px;font-size:9.6px;letter-spacing:0.228px;">Perfil</span>
<span class="t" style="left:276.50px;top:21.00px;font-size:9.6px;letter-spacing:-0.075px;">Equipe</span>
<span class="t" style="left:314.00px;top:21.00px;font-size:9.6px;letter-spacing:-0.139px;">Ferramentas</span>
<span class="t" style="left:374.50px;top:21.00px;font-size:9.6px;letter-spacing:-0.456px;">Janela</span>
<span class="t" style="left:408.50px;top:21.00px;font-size:9.6px;letter-spacing:0.113px;">Ajuda</span>
<span class="t" style="left:859.50px;top:20.00px;font-size:9.6px;letter-spacing:-0.171px;color:#6e6e6e;-webkit-text-stroke:0.08px currentColor;">Pesquisar (Ctrl+I)</span>
<span class="t" style="left:71.50px;top:43.50px;font-size:9.8px;letter-spacing:-0.153px;">&lt;config. default&gt;</span>
<span class="t b" style="left:21.50px;top:74.00px;font-size:10.2px;letter-spacing:-0.569px;">Serviços</span>
<span class="t" style="left:-73.35px;top:105.00px;font-size:9.6px;letter-spacing:-0.300px;color:#fff;">Sistema_Supervisorio_Fawcon</span>
<span class="t" style="left:-54.31px;top:119.97px;font-size:9.6px;letter-spacing:-0.300px;">Pacotes de Códigos-fonte</span>
<span class="t" style="left:-21.86px;top:149.32px;font-size:9.6px;letter-spacing:-0.300px;">Main.java</span>
<span class="t" style="left:-37.36px;top:164.30px;font-size:9.6px;letter-spacing:-0.300px;">fawcon.Imagens</span>
<span class="t" style="left:-36.23px;top:179.28px;font-size:9.6px;letter-spacing:-0.300px;">fawcon.controller</span>
<span class="t" style="left:-8.24px;top:194.25px;font-size:9.6px;letter-spacing:-0.300px;">Biografia.java</span>
<span class="t" style="left:-21.11px;top:209.23px;font-size:9.6px;letter-spacing:-0.300px;">LoginController.java</span>
<span class="t" style="left:-14.28px;top:224.20px;font-size:9.6px;letter-spacing:-0.300px;">TelaCadUserController.java</span>
<span class="t" style="left:-14.62px;top:239.18px;font-size:9.6px;letter-spacing:-0.300px;">TelaPrincipalController.java</span>
<span class="t" style="left:-37.37px;top:254.15px;font-size:9.6px;letter-spacing:-0.300px;">fawcon.estilos</span>
<span class="t" style="left:-37.38px;top:269.12px;font-size:9.6px;letter-spacing:-0.300px;">fawcon.model.dao</span>
<span class="t" style="left:-37.34px;top:284.10px;font-size:9.6px;letter-spacing:-0.300px;">fawcon.model.database</span>
<span class="t" style="left:-38.93px;top:299.07px;font-size:9.6px;letter-spacing:-0.300px;">fawcon.model.domain</span>
<span class="t" style="left:-36.27px;top:314.05px;font-size:9.6px;letter-spacing:-0.300px;">fawcon.view</span>
<span class="t" style="left:-22.53px;top:329.02px;font-size:9.6px;letter-spacing:-0.300px;">Login.fxml</span>
<span class="t" style="left:-15.69px;top:344.00px;font-size:9.6px;letter-spacing:-0.300px;">TelaCadUser.fxml</span>
<span class="t" style="left:-16.06px;top:358.98px;font-size:9.6px;letter-spacing:-0.300px;">TelaPrincipal.fxml</span>
<span class="t" style="left:-35.57px;top:373.95px;font-size:9.6px;letter-spacing:-0.300px;">fawcon.teste</span>
<span class="t" style="left:-43.18px;top:403.90px;font-size:9.6px;letter-spacing:-0.347px;">Pacotes de Testes</span>
<span class="t" style="left:189.00px;top:73.00px;font-size:9.8px;letter-spacing:-0.367px;">Main.java</span>
<span class="t" style="left:267.50px;top:73.00px;font-size:9.8px;letter-spacing:-0.294px;">LoginController.java</span>
<span class="t" style="left:177.50px;top:92.00px;font-size:9.6px;letter-spacing:-0.467px;">Código-Fonte</span>
<span class="t" style="left:255.00px;top:92.00px;font-size:9.6px;letter-spacing:-0.479px;">Histórico</span>
<span class="t" style="left:185.56px;top:112.00px;font-size:9.6px;-webkit-text-stroke:0.08px currentColor;">1</span>
<span class="t" style="left:185.56px;top:126.96px;font-size:9.6px;-webkit-text-stroke:0.08px currentColor;">2</span>
<span class="t" style="left:185.56px;top:141.92px;font-size:9.6px;-webkit-text-stroke:0.08px currentColor;">3</span>
<span class="t" style="left:185.56px;top:156.88px;font-size:9.6px;-webkit-text-stroke:0.08px currentColor;">4</span>
<span class="t" style="left:185.56px;top:171.84px;font-size:9.6px;-webkit-text-stroke:0.08px currentColor;">5</span>
<span class="t" style="left:185.56px;top:186.80px;font-size:9.6px;-webkit-text-stroke:0.08px currentColor;">6</span>
<span class="t" style="left:185.56px;top:201.76px;font-size:9.6px;-webkit-text-stroke:0.08px currentColor;">7</span>
<span class="t" style="left:185.56px;top:216.72px;font-size:9.6px;-webkit-text-stroke:0.08px currentColor;">8</span>
<span class="t" style="left:185.56px;top:231.68px;font-size:9.6px;-webkit-text-stroke:0.08px currentColor;">9</span>
<span class="t" style="left:180.23px;top:246.64px;font-size:9.6px;-webkit-text-stroke:0.08px currentColor;">10</span>
<span class="t" style="left:180.93px;top:261.60px;font-size:9.6px;-webkit-text-stroke:0.08px currentColor;">11</span>
<span class="t" style="left:180.23px;top:276.56px;font-size:9.6px;-webkit-text-stroke:0.08px currentColor;">12</span>
<span class="t" style="left:180.23px;top:291.52px;font-size:9.6px;-webkit-text-stroke:0.08px currentColor;">13</span>
<span class="t" style="left:180.23px;top:306.48px;font-size:9.6px;-webkit-text-stroke:0.08px currentColor;">14</span>
<span class="t" style="left:180.23px;top:321.44px;font-size:9.6px;-webkit-text-stroke:0.08px currentColor;">15</span>
<span class="t" style="left:180.23px;top:336.40px;font-size:9.6px;-webkit-text-stroke:0.08px currentColor;">16</span>
<span class="t" style="left:180.23px;top:351.36px;font-size:9.6px;-webkit-text-stroke:0.08px currentColor;">17</span>
<span class="t" style="left:180.23px;top:366.32px;font-size:9.6px;-webkit-text-stroke:0.08px currentColor;">18</span>
<span class="t" style="left:180.23px;top:396.24px;font-size:9.6px;-webkit-text-stroke:0.08px currentColor;">20</span>
<span class="t" style="left:180.23px;top:411.20px;font-size:9.6px;-webkit-text-stroke:0.08px currentColor;">21</span>
<span class="t" style="left:180.23px;top:426.16px;font-size:9.6px;-webkit-text-stroke:0.08px currentColor;">22</span>
<span class="t" style="left:180.23px;top:441.12px;font-size:9.6px;-webkit-text-stroke:0.08px currentColor;">23</span>
<span class="t b" style="left:174.50px;top:468.50px;font-size:10.2px;letter-spacing:-0.507px;">Notificações</span>
<span class="t b" style="left:252.00px;top:468.50px;font-size:10.2px;letter-spacing:-0.369px;">Saída - Sistema_Supervisorio_Fawcon (jfxsa-run)</span>
<span class="t" style="left:40.50px;top:467.50px;font-size:10px;letter-spacing:-0.339px;color:#8a8a8a;">&lt;vazio&gt;</span>
<span class="t" style="left:-16.40px;top:484.50px;font-size:9.6px;letter-spacing:-0.300px;color:#8a8a8a;">Main</span>
<span class="t" style="left:-52.51px;top:499.50px;font-size:9.6px;letter-spacing:-0.300px;">main(String[] args)</span>
<span class="t" style="left:-51.17px;top:514.50px;font-size:9.6px;letter-spacing:-0.300px;">start(Stage stage)</span>
<span class="t" style="left:23.30px;top:514.50px;font-size:9.6px;">↑</span>
<span class="t" style="left:30.50px;top:514.50px;font-size:9.6px;letter-spacing:-0.444px;">Application</span>
<span class="t" style="left:547.00px;top:596.00px;font-size:9.6px;letter-spacing:-0.305px;">Sistema_Supervisorio_Fawcon (jfxsa-run)</span>
<span class="t" style="left:780.00px;top:596.00px;font-size:9.6px;letter-spacing:-0.057px;color:#2f6ed0;">running...</span>
<span class="t" style="left:953.50px;top:596.50px;font-size:9px;letter-spacing:-0.408px;">1:1</span>
<span class="t" style="left:1008.30px;top:596.50px;font-size:9px;letter-spacing:-0.758px;">INS</span>
<div class="a" id="code" style="left:212px;top:111px;width:787px;height:335px;overflow:hidden">
<div class="t m" style="left:7.00px;top:1.00px;font-size:11.1px"><span style="color:#0000e6">package</span> fawcon;</div>
<div class="t m" style="left:7.00px;top:30.92px;font-size:11.1px"><span style="color:#0000e6">import</span> java.io.IOException;</div>
<div class="t m" style="left:7.00px;top:45.88px;font-size:11.1px"><span style="color:#0000e6">import</span> javafx.application.Application;</div>
<div class="t m" style="left:7.00px;top:60.84px;font-size:11.1px"><span style="color:#0000e6">import</span> javafx.fxml.FXMLLoader;</div>
<div class="t m" style="left:7.00px;top:75.80px;font-size:11.1px"><span style="color:#0000e6">import</span> javafx.scene.Parent;</div>
<div class="t m" style="left:7.00px;top:90.76px;font-size:11.1px"><span style="color:#0000e6">import</span> javafx.scene.Scene;</div>
<div class="t m" style="left:7.00px;top:105.72px;font-size:11.1px"><span style="color:#0000e6">import</span> javafx.scene.image.Image;</div>
<div class="t m" style="left:7.00px;top:120.68px;font-size:11.1px"><span style="color:#0000e6">import</span> javafx.stage.Stage;</div>
<div class="t m" style="left:7.00px;top:135.64px;font-size:11.1px"><span style="color:#0000e6">import</span> javafx.stage.StageStyle;</div>
<div class="t m" style="left:7.00px;top:165.56px;font-size:11.1px"><span style="color:#969696">/**</span></div>
<div class="t m" style="left:7.00px;top:180.52px;font-size:11.1px"><span style="color:#969696"> *</span></div>
<div class="t m" style="left:7.00px;top:195.48px;font-size:11.1px"><span style="color:#969696"> * @author will</span></div>
<div class="t m" style="left:7.00px;top:210.44px;font-size:11.1px"><span style="color:#969696"> */</span></div>
<div class="t m" style="left:7.00px;top:225.40px;font-size:11.1px"><span style="color:#0000e6">public class</span> Main <span style="color:#0000e6">extends</span> Application {</div>
<div class="t m" style="left:7.00px;top:255.32px;font-size:11.1px">    @Override</div>
<div class="t m" style="left:7.00px;top:270.28px;font-size:11.1px">    <span style="color:#0000e6">public void</span> start(Stage stage) <span style="color:#0000e6">throws</span> IOException {</div>
<div class="t m" style="left:7.00px;top:300.20px;font-size:11.1px">        Image ico;</div>
<div class="t m" style="left:7.00px;top:315.16px;font-size:11.1px">        ico = <span style="color:#0000e6">new</span> Image(getClass().getResource(<span style="color:#ce7b00">&quot;Imagens/icone.png&quot;</span>).toExternalForm());</div>
</div>
<div class="a" id="outtext" style="left:192px;top:484px;width:817px;height:95px;overflow:hidden">
<div class="t m" style="left:15.30px;top:-0.50px;font-size:9.71px;color:#8c8c8c;-webkit-text-stroke:0.25px #8c8c8c">jfx-deployment-script:</div>
<div class="t m" style="left:15.30px;top:12.60px;font-size:9.71px;color:#8c8c8c;-webkit-text-stroke:0.25px #8c8c8c">jfx-deployment:</div>
<div class="t m" style="left:15.30px;top:25.70px;font-size:9.71px;color:#8c8c8c;-webkit-text-stroke:0.25px #8c8c8c">jar:</div>
<div class="t m" style="left:15.30px;top:38.80px;font-size:9.71px;color:#111;-webkit-text-stroke:0.25px #111">Copying 13 files to C:\Users\will\Documents\NetBeansProjects\Sistema_Supervisorio_Fawcon\dist\run1176043059</div>
<div class="t m" style="left:15.30px;top:51.90px;font-size:9.71px;color:#8c8c8c;-webkit-text-stroke:0.25px #8c8c8c">jfx-project-run:</div>
<div class="t m" style="left:15.30px;top:65.00px;font-size:9.71px;color:#cc1a1a;-webkit-text-stroke:0.25px #cc1a1a">Executing C:\Users\will\Documents\NetBeansProjects\Sistema_Supervisorio_Fawcon\dist\run1176043059\Sistema_Supervisorio_Fawcon.jar using platform</div>
</div>
</body>
</html>
